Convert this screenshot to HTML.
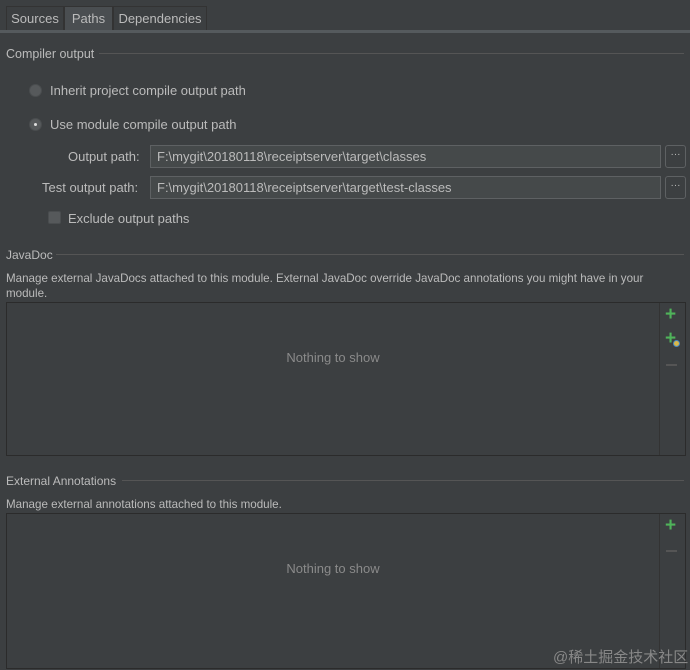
<!DOCTYPE html>
<html><head><meta charset="utf-8"><style>
*{margin:0;padding:0;box-sizing:border-box}
body{width:690px;height:670px;background:#3c3f41;font-family:"Liberation Sans",sans-serif;font-size:12.5px;color:#bbbbbb;position:relative;overflow:hidden}
.a{position:absolute;white-space:nowrap}
.tab{position:absolute;top:6px;height:25px;line-height:24px;text-align:center;font-size:13px;border:1px solid #333;border-bottom:none}
.line{position:absolute;height:1px;background:#555}
.field{position:absolute;left:150px;width:511px;height:23px;border:1px solid #5e6163;background:#45494a;padding-left:6px;line-height:21px;color:#bbb;font-size:13px}
.btn{position:absolute;left:665px;width:21px;height:23px;border:1px solid #5e6163;border-radius:3px;text-align:center;line-height:18px;font-size:10px}
.box{position:absolute;left:6px;width:680px;border:1px solid #2b2b2b;background:#3c3f41}
.tb{position:absolute;left:652px;top:0;bottom:0;width:1px;background:#333}
.nts{position:absolute;left:0;width:652px;text-align:center;color:#8a8a8a;font-size:13px}
.plus{position:absolute;color:#4fb35a;font-size:19px;font-weight:bold;line-height:16px}
.minus{position:absolute;width:11px;height:2px;background:#555}
.radio{position:absolute;width:13px;height:13px;border-radius:50%;background:#56595b;border:1px solid #4a4d4f}
</style></head><body>
<div class="tab" style="left:6px;width:58px;background:#3c3f41">Sources</div>
<div class="tab" style="left:64px;width:49px;background:#4a4e51">Paths</div>
<div class="tab" style="left:113px;width:94px;background:#3c3f41">Dependencies</div>
<div class="line" style="left:0;top:30px;width:690px;height:3px;background:#555a5d"></div>

<div class="a" style="left:6px;top:47px">Compiler output</div>
<div class="line" style="left:99px;top:53px;width:585px"></div>
<div class="radio" style="left:29px;top:84px"></div>
<div class="a" style="left:50px;top:83px;font-size:13px">Inherit project compile output path</div>
<div class="radio" style="left:29px;top:118px"><div style="position:absolute;left:4px;top:4px;width:3px;height:3px;border-radius:50%;background:#ddd"></div></div>
<div class="a" style="left:50px;top:117px;font-size:13px">Use module compile output path</div>
<div class="a" style="left:68px;top:149px;font-size:13px">Output path:</div>
<div class="field" style="top:145px">F:\mygit\20180118\receiptserver\target\classes</div>
<div class="btn" style="top:145px">···</div>
<div class="a" style="left:42px;top:180px;font-size:13px">Test output path:</div>
<div class="field" style="top:176px">F:\mygit\20180118\receiptserver\target\test-classes</div>
<div class="btn" style="top:176px">···</div>
<div style="position:absolute;left:48px;top:211px;width:13px;height:13px;background:#56595b;border:1px solid #4a4d4f;border-radius:2px"></div>
<div class="a" style="left:68px;top:211px;font-size:13px">Exclude output paths</div>

<div class="a" style="left:6px;top:248px;font-size:12px">JavaDoc</div>
<div class="line" style="left:56px;top:254px;width:628px"></div>
<div class="a" style="left:6px;top:272px;font-size:11.6px">Manage external JavaDocs attached to this module. External JavaDoc override JavaDoc annotations you might have in your</div>
<div class="a" style="left:6px;top:287px;font-size:11.6px">module.</div>
<div class="box" style="top:302px;height:154px">
<div class="tb"></div>
<div class="nts" style="top:47px">Nothing to show</div>
<div class="plus" style="left:658px;top:4px">+</div>
<div class="plus" style="left:658px;top:28px">+</div>
<div style="position:absolute;left:666px;top:37px;width:7px;height:7px;border-radius:50%;background:#d9b84a;border:1px solid #4a8ac0"></div>
<div class="minus" style="left:659px;top:61px"></div>
</div>

<div class="a" style="left:6px;top:474px;font-size:12px">External Annotations</div>
<div class="line" style="left:122px;top:480px;width:562px"></div>
<div class="a" style="left:6px;top:498px;font-size:11.6px">Manage external annotations attached to this module.</div>
<div class="box" style="top:513px;height:156px">
<div class="tb"></div>
<div class="nts" style="top:47px">Nothing to show</div>
<div class="plus" style="left:658px;top:4px">+</div>
<div class="minus" style="left:659px;top:36px"></div>
</div>
<div class="a" style="left:553px;top:646px;color:#888;font-size:15px;font-family:'Liberation Sans','Noto Sans CJK SC',sans-serif">@稀土掘金技术社区</div>
</body></html>
